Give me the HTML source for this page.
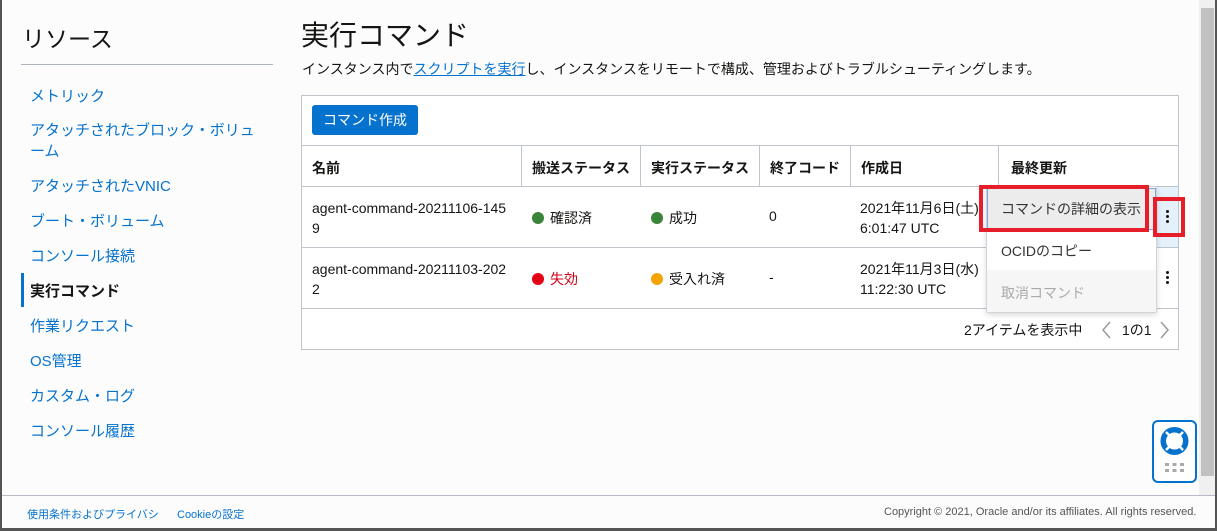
<!DOCTYPE html>
<html><head><meta charset="utf-8"><style>
*{box-sizing:border-box;margin:0;padding:0}
body{width:1217px;height:531px;background:#fcfcfc;font-family:"Liberation Sans","Noto Sans CJK JP",sans-serif;color:#161513;position:relative;overflow:hidden;font-size:14px}
.a{position:absolute;white-space:nowrap}
.nav{color:#0572ce;font-size:15px;left:30px}
.th{font-weight:bold;font-size:14px;top:158px}
.vl{position:absolute;width:1px;background:#c0c4cb}
.hl{position:absolute;height:1px;background:#c0c4cb}
.dot{display:inline-block;width:12px;height:12px;border-radius:50%;margin-right:6px;vertical-align:-1px}
.kb{position:absolute;width:3px;height:3px;background:#161513;border-radius:50%}
</style></head><body>
<div style="position:absolute;left:0;top:0;width:2px;height:531px;background:#555"></div>
<div style="position:absolute;right:0;top:0;width:2px;height:531px;background:#555"></div>
<div style="position:absolute;left:0;bottom:0;width:1217px;height:3px;background:#555"></div>
<div style="position:absolute;left:1199px;top:0;width:16px;height:495px;background:#f0f0f0"></div>
<div style="position:absolute;left:1201px;top:8px;width:13px;height:468px;background:#c1c1c1"></div>
<div class="a" style="left:22px;top:20px;font-size:23px">リソース</div>
<div class="hl" style="left:21px;top:64px;width:252px;background:#aeb4be"></div>
<div class="a nav" style="top:85px">メトリック</div>
<div class="a nav" style="top:120px;line-height:21px">アタッチされたブロック・ボリュ<br>ーム</div>
<div class="a nav" style="top:175px">アタッチされたVNIC</div>
<div class="a nav" style="top:210px">ブート・ボリューム</div>
<div class="a nav" style="top:245px">コンソール接続</div>
<div style="position:absolute;left:21px;top:273px;width:3px;height:34px;background:#0572ce"></div>
<div class="a nav" style="top:280px;color:#161513;font-weight:bold">実行コマンド</div>
<div class="a nav" style="top:315px">作業リクエスト</div>
<div class="a nav" style="top:350px">OS管理</div>
<div class="a nav" style="top:385px">カスタム・ログ</div>
<div class="a nav" style="top:420px">コンソール履歴</div>

<div class="a" style="left:301px;top:14px;font-size:28px">実行コマンド</div>
<div class="a" style="left:302px;top:59px;font-size:14px">インスタンス内で<span style="color:#0572ce;text-decoration:underline">スクリプトを実行</span>し、インスタンスをリモートで構成、管理およびトラブルシューティングします。</div>

<div style="position:absolute;left:301px;top:95px;width:878px;height:255px;border:1px solid #c0c4cb;background:#fff"></div>
<div class="a" style="left:312px;top:105px;width:106px;height:30px;background:#0572ce;color:#fff;border-radius:3px;font-size:14px;line-height:30px;text-align:center">コマンド作成</div>
<div class="hl" style="left:302px;top:145px;width:876px"></div>
<div class="hl" style="left:302px;top:186px;width:876px"></div>
<div class="hl" style="left:302px;top:247px;width:876px"></div>
<div class="hl" style="left:302px;top:308px;width:876px"></div>
<div class="vl" style="left:521px;top:146px;height:40px"></div>
<div class="vl" style="left:640px;top:146px;height:40px"></div>
<div class="vl" style="left:759px;top:146px;height:40px"></div>
<div class="vl" style="left:850px;top:146px;height:40px"></div>
<div class="vl" style="left:998px;top:146px;height:40px"></div>
<div class="a th" style="left:312px">名前</div>
<div class="a th" style="left:532px">搬送ステータス</div>
<div class="a th" style="left:651px">実行ステータス</div>
<div class="a th" style="left:770px">終了コード</div>
<div class="a th" style="left:861px">作成日</div>
<div class="a th" style="left:1011px">最終更新</div>

<div style="position:absolute;left:1155px;top:187px;width:23px;height:60px;background:#e4f0fa"></div>
<div class="a" style="left:312px;top:198px;line-height:20px">agent-command-20211106-145<br>9</div>
<div class="a" style="left:532px;top:208px"><span class="dot" style="background:#3a843a"></span>確認済</div>
<div class="a" style="left:651px;top:208px"><span class="dot" style="background:#3a843a"></span>成功</div>
<div class="a" style="left:769px;top:208px">0</div>
<div class="a" style="left:860px;top:198px;line-height:20px">2021年11月6日(土)<br>6:01:47 UTC</div>
<div class="a" style="left:312px;top:259px;line-height:20px">agent-command-20211103-202<br>2</div>
<div class="a" style="left:532px;top:269px;color:#d0021b"><span class="dot" style="background:#e30014"></span>失効</div>
<div class="a" style="left:651px;top:269px"><span class="dot" style="background:#f5a300"></span>受入れ済</div>
<div class="a" style="left:769px;top:269px">-</div>
<div class="a" style="left:860px;top:259px;line-height:20px">2021年11月3日(水)<br>11:22:30 UTC</div>
<div class="kb" style="left:1166px;top:210px"></div><div class="kb" style="left:1166px;top:215px"></div><div class="kb" style="left:1166px;top:220px"></div>
<div class="kb" style="left:1166px;top:271px"></div><div class="kb" style="left:1166px;top:276px"></div><div class="kb" style="left:1166px;top:281px"></div>
<div class="a" style="left:964px;top:320px">2アイテムを表示中</div>
<svg style="position:absolute;left:1100px;top:320px" width="14" height="20"><path d="M10 2 L3 10 L10 18" fill="none" stroke="#999" stroke-width="1.5"/></svg>
<div class="a" style="left:1122px;top:320px">1の1</div>
<svg style="position:absolute;left:1157px;top:320px" width="14" height="20"><path d="M4 2 L11 10 L4 18" fill="none" stroke="#999" stroke-width="1.5"/></svg>

<div style="position:absolute;left:986px;top:186px;width:171px;height:127px;background:#fff;border:1px solid #d0d3d8;border-radius:2px;box-shadow:0 2px 6px rgba(0,0,0,.15)"></div>
<div style="position:absolute;left:987px;top:188px;width:169px;height:42px;background:#ececec;border:1px solid #7aa7e0"></div>
<div class="a" style="left:1001px;top:199px;font-size:14px;color:#333">コマンドの詳細の表示</div>
<div class="a" style="left:1001px;top:241px;font-size:14px;color:#333">OCIDのコピー</div>
<div style="position:absolute;left:987px;top:270px;width:169px;height:42px;background:#f6f6f6"></div>
<div class="a" style="left:1001px;top:283px;font-size:14px;color:#aaa">取消コマンド</div>
<div style="position:absolute;left:979px;top:185px;width:170px;height:47px;border:4px solid #e61e2a"></div>
<div style="position:absolute;left:1153px;top:197px;width:32px;height:40px;border:4px solid #e61e2a"></div>

<div style="position:absolute;left:1152px;top:420px;width:45px;height:63px;border:2px solid #0572ce;border-radius:6px;background:#fff">
<svg width="41" height="59" viewBox="0 0 41 59" style="position:absolute;left:0;top:0"><circle cx="20.5" cy="19" r="11" fill="none" stroke="#0572ce" stroke-width="5"/><circle cx="20.5" cy="19" r="13.5" fill="none" stroke="#0572ce" stroke-width="1"/><g stroke="#fff" stroke-width="2.5"><line x1="12" y1="10" x2="15" y2="13"/><line x1="29" y1="10" x2="26" y2="13"/><line x1="12" y1="28" x2="15" y2="25"/><line x1="29" y1="28" x2="26" y2="25"/></g><g fill="#aaa"><rect x="11" y="41" width="4" height="3"/><rect x="18.5" y="41" width="4" height="3"/><rect x="26" y="41" width="4" height="3"/><rect x="11" y="47" width="4" height="3"/><rect x="18.5" y="47" width="4" height="3"/><rect x="26" y="47" width="4" height="3"/></g></svg></div>

<div class="hl" style="left:2px;top:495px;width:1213px;background:#b8bcc4"></div>
<div class="a" style="left:27px;top:506px;font-size:11px;color:#0572ce">使用条件およびプライバシ</div>
<div class="a" style="left:177px;top:506px;font-size:11px;color:#0572ce">Cookieの設定</div>
<div class="a" style="left:884px;top:506px;font-size:11px;color:#555">Copyright © 2021, Oracle and/or its affiliates. All rights reserved.</div>
</body></html>
